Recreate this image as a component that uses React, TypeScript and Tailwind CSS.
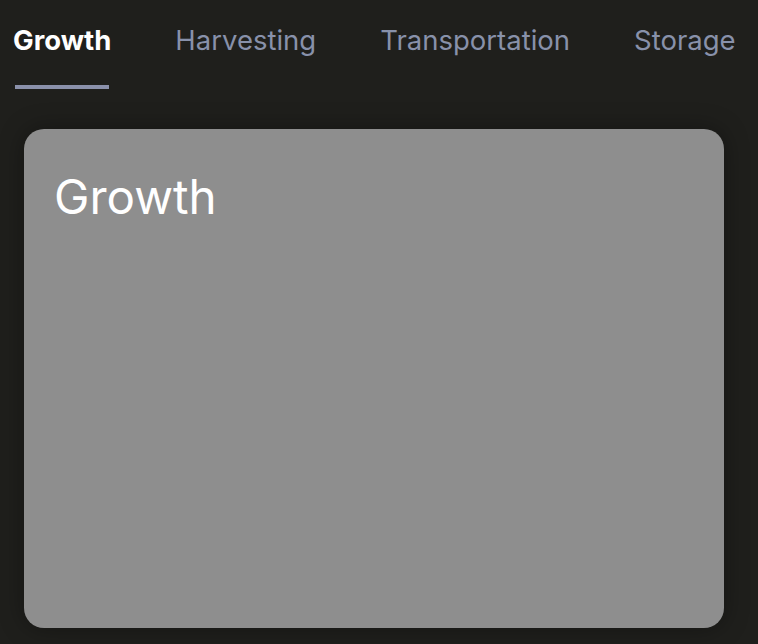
import React from "react";

const tabs = ["Growth", "Harvesting", "Transportation", "Storage"];

export default function App() {
  return (
    <div
      className="w-[758px] h-[644px] bg-[#1f1f1c] overflow-hidden"
      style={{ fontFamily: "Inter, 'Noto Sans', sans-serif" }}
    >
      <div className="flex gap-[64px] pl-[13px] pt-[22px]">
        {tabs.map((t, i) => (
          <div key={t} className="flex flex-col items-center">
            <span
              className={
                i === 0
                  ? "text-[27.5px] leading-[36px] font-bold text-white"
                  : "text-[27.5px] leading-[36px] font-normal text-[#8891aa]"
              }
            >
              {t}
            </span>
            <div className={i === 0 ? "mt-[27px] h-[4px] w-[94px] bg-[#8a90aa]" : "mt-[27px] h-[4px]"} />
          </div>
        ))}
      </div>
      <div className="mx-[24px] mt-[40px] h-[499px] w-[700px] rounded-[20px] bg-[#8e8e8e] shadow-[0_0_24px_rgba(0,0,0,0.35)] px-[30px] pt-[40px]">
        <h2 className="text-[47.5px] leading-[56px] text-white font-normal">Growth</h2>
      </div>
    </div>
  );
}
